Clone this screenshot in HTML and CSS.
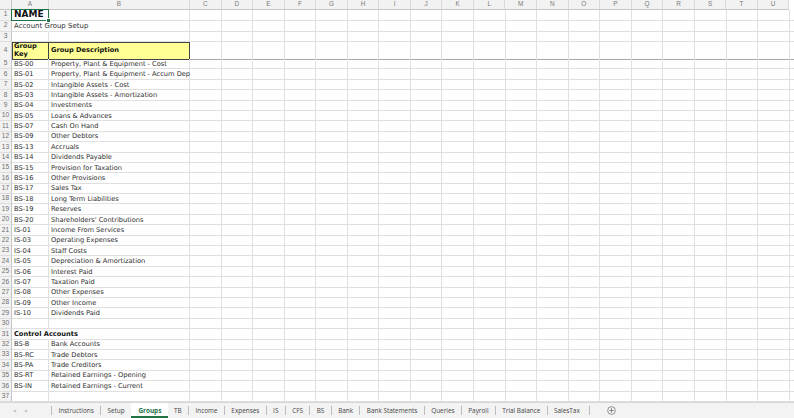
FILE: index.html
```html
<!DOCTYPE html>
<html>
<head>
<meta charset="utf-8">
<link rel="stylesheet" href="styles.css">
</head>
<body>
<div class="app">
  <div class="sheet">
    <div class="row colhead">
      <div class="rh corner"></div>
      <div class="ch">A</div>
      <div class="ch">B</div>
      <div class="ch-rest">
        <span>C</span><span>D</span><span>E</span><span>F</span><span>G</span><span>H</span><span>I</span><span>J</span><span>K</span><span>L</span><span>M</span><span>N</span><span>O</span><span>P</span><span>Q</span><span>R</span><span>S</span><span>T</span><span>U</span>
      </div>
    </div>
    <div class="row r1">
      <div class="rh">1</div>
      <div class="c a selected"><span class="name">NAME</span></div>
      <div class="c b"></div>
      <div class="rest"></div>
    </div>
    <div class="row r2">
      <div class="rh">2</div>
      <div class="c a"><span class="over">Account Group Setup</span></div>
      <div class="c b"></div>
      <div class="rest"></div>
    </div>
    <div class="row r3">
      <div class="rh">3</div>
      <div class="c a"></div>
      <div class="c b"></div>
      <div class="rest"></div>
    </div>
    <div class="row r4">
      <div class="rh">4</div>
      <div class="c a hdr">Group<br>Key</div>
      <div class="c b hdr">Group Description</div>
      <div class="rest"></div>
    </div>
    <div class="row"><div class="rh">5</div><div class="c a">BS-00</div><div class="c b">Property, Plant &amp; Equipment - Cost</div><div class="rest"></div></div>
    <div class="row"><div class="rh">6</div><div class="c a">BS-01</div><div class="c b">Property, Plant &amp; Equipment - Accum Dep</div><div class="rest"></div></div>
    <div class="row"><div class="rh">7</div><div class="c a">BS-02</div><div class="c b">Intangible Assets - Cost</div><div class="rest"></div></div>
    <div class="row"><div class="rh">8</div><div class="c a">BS-03</div><div class="c b">Intangible Assets - Amortization</div><div class="rest"></div></div>
    <div class="row"><div class="rh">9</div><div class="c a">BS-04</div><div class="c b">Investments</div><div class="rest"></div></div>
    <div class="row"><div class="rh">10</div><div class="c a">BS-05</div><div class="c b">Loans &amp; Advances</div><div class="rest"></div></div>
    <div class="row"><div class="rh">11</div><div class="c a">BS-07</div><div class="c b">Cash On Hand</div><div class="rest"></div></div>
    <div class="row"><div class="rh">12</div><div class="c a">BS-09</div><div class="c b">Other Debtors</div><div class="rest"></div></div>
    <div class="row"><div class="rh">13</div><div class="c a">BS-13</div><div class="c b">Accruals</div><div class="rest"></div></div>
    <div class="row"><div class="rh">14</div><div class="c a">BS-14</div><div class="c b">Dividends Payable</div><div class="rest"></div></div>
    <div class="row"><div class="rh">15</div><div class="c a">BS-15</div><div class="c b">Provision for Taxation</div><div class="rest"></div></div>
    <div class="row"><div class="rh">16</div><div class="c a">BS-16</div><div class="c b">Other Provisions</div><div class="rest"></div></div>
    <div class="row"><div class="rh">17</div><div class="c a">BS-17</div><div class="c b">Sales Tax</div><div class="rest"></div></div>
    <div class="row"><div class="rh">18</div><div class="c a">BS-18</div><div class="c b">Long Term Liabilities</div><div class="rest"></div></div>
    <div class="row"><div class="rh">19</div><div class="c a">BS-19</div><div class="c b">Reserves</div><div class="rest"></div></div>
    <div class="row"><div class="rh">20</div><div class="c a">BS-20</div><div class="c b">Shareholders' Contributions</div><div class="rest"></div></div>
    <div class="row"><div class="rh">21</div><div class="c a">IS-01</div><div class="c b">Income From Services</div><div class="rest"></div></div>
    <div class="row"><div class="rh">22</div><div class="c a">IS-03</div><div class="c b">Operating Expenses</div><div class="rest"></div></div>
    <div class="row"><div class="rh">23</div><div class="c a">IS-04</div><div class="c b">Staff Costs</div><div class="rest"></div></div>
    <div class="row"><div class="rh">24</div><div class="c a">IS-05</div><div class="c b">Depreciation &amp; Amortization</div><div class="rest"></div></div>
    <div class="row"><div class="rh">25</div><div class="c a">IS-06</div><div class="c b">Interest Paid</div><div class="rest"></div></div>
    <div class="row"><div class="rh">26</div><div class="c a">IS-07</div><div class="c b">Taxation Paid</div><div class="rest"></div></div>
    <div class="row"><div class="rh">27</div><div class="c a">IS-08</div><div class="c b">Other Expenses</div><div class="rest"></div></div>
    <div class="row"><div class="rh">28</div><div class="c a">IS-09</div><div class="c b">Other Income</div><div class="rest"></div></div>
    <div class="row"><div class="rh">29</div><div class="c a">IS-10</div><div class="c b">Dividends Paid</div><div class="rest"></div></div>
    <div class="row"><div class="rh">30</div><div class="c a"></div><div class="c b"></div><div class="rest"></div></div>
    <div class="row"><div class="rh">31</div><div class="c a spill"><span class="over bold">Control Accounts</span></div><div class="c b"></div><div class="rest"></div></div>
    <div class="row"><div class="rh">32</div><div class="c a">BS-B</div><div class="c b">Bank Accounts</div><div class="rest"></div></div>
    <div class="row"><div class="rh">33</div><div class="c a">BS-RC</div><div class="c b">Trade Debtors</div><div class="rest"></div></div>
    <div class="row"><div class="rh">34</div><div class="c a">BS-PA</div><div class="c b">Trade Creditors</div><div class="rest"></div></div>
    <div class="row"><div class="rh">35</div><div class="c a">BS-RT</div><div class="c b">Retained Earnings - Opening</div><div class="rest"></div></div>
    <div class="row"><div class="rh">36</div><div class="c a">BS-IN</div><div class="c b">Retained Earnings - Current</div><div class="rest"></div></div>
    <div class="row"><div class="rh">37</div><div class="c a"></div><div class="c b"></div><div class="rest"></div></div>
  </div>
  <div class="tabbar">
    <div class="navs"><span class="nav">&#9664;</span><span class="nav">&#9654;</span></div>
    <div class="tab">Instructions</div>
    <div class="tab">Setup</div>
    <div class="tab active">Groups</div>
    <div class="tab">TB</div>
    <div class="tab">Income</div>
    <div class="tab">Expenses</div>
    <div class="tab">IS</div>
    <div class="tab">CFS</div>
    <div class="tab">BS</div>
    <div class="tab">Bank</div>
    <div class="tab">Bank Statements</div>
    <div class="tab">Queries</div>
    <div class="tab">Payroll</div>
    <div class="tab">Trial Balance</div>
    <div class="tab last">SalesTax</div>
    <div class="add">
      <svg width="9" height="9" viewBox="0 0 10 10"><circle cx="5" cy="5" r="4.3" fill="none" stroke="#7a7a7a" stroke-width="0.9"/><path d="M5 2.6v4.8M2.6 5h4.8" stroke="#7a7a7a" stroke-width="1"/></svg>
    </div>
  </div>
</div>
</body>
</html>
```
FILE: styles.css
```css
html, body {
  margin: 0;
  padding: 0;
  background: #ffffff;
}
.app {
  width: 794px;
  height: 418px;
  overflow: hidden;
  display: flex;
  flex-direction: column;
  font-family: "DejaVu Sans", "Liberation Sans", sans-serif;
}
.sheet {
  height: 402px;
  overflow: hidden;
  flex: none;
}
.row {
  display: grid;
  grid-template-columns: 12px 37px 141px 1fr;
  height: 10.4px;
  box-sizing: border-box;
}
.colhead { height: 9.5px; }
.r1 { height: 11px; }
.r2 { height: 11px; }
.r3 { height: 10.5px; }
.r4 { height: 17px; }

.rh {
  background: #f2f2f2;
  border-right: 1px solid #c6c6c6;
  border-bottom: 1px solid #dedede;
  box-sizing: border-box;
  color: #707070;
  font-family: "Liberation Sans", sans-serif;
  font-size: 6.6px;
  display: flex;
  align-items: center;
  justify-content: center;
  line-height: 1;
}
.colhead .rh { border-bottom: 1px solid #c6c6c6; }
.ch, .ch-rest span {
  background: #f2f2f2;
  border-right: 1px solid #dadada;
  border-bottom: 1px solid #c6c6c6;
  box-sizing: border-box;
  color: #7a7a7a;
  font-family: "Liberation Sans", sans-serif;
  font-size: 6.4px;
  display: flex;
  align-items: center;
  justify-content: center;
  line-height: 1;
}
.ch-rest {
  display: flex;
  overflow: hidden;
}
.ch-rest span {
  flex: 0 0 31.56px;
  height: 100%;
}

.c {
  border-right: 1px solid #e0e0e0;
  border-bottom: 1px solid #e0e0e0;
  box-sizing: border-box;
  font-size: 6.65px;
  color: #2e2e2e;
  display: flex;
  align-items: flex-end;
  padding: 0 0 1px 2px;
  white-space: nowrap;
  line-height: 1;
  position: relative;
}
.rest {
  border-bottom: 1px solid #e0e0e0;
  box-sizing: border-box;
  background-image: repeating-linear-gradient(to right, transparent 0, transparent 30.56px, #e0e0e0 30.56px, #e0e0e0 31.56px);
}
.over {
  position: relative;
  z-index: 1;
  white-space: nowrap;
}
.bold { font-weight: bold; color: #111; }
.spill { border-right-color: transparent; }

.r1 .a .name {
  font-weight: bold;
  font-size: 9px;
  color: #111;
}
.r2 .a { font-size: 7px; color: #333; border-right-color: transparent; }

.selected::after {
  content: "";
  position: absolute;
  left: -1px;
  top: -1px;
  right: -1px;
  bottom: -1px;
  border: 1.5px solid #217346;
  pointer-events: none;
}
.selected::before {
  content: "";
  position: absolute;
  right: -3px;
  bottom: -3px;
  width: 3px;
  height: 3px;
  background: #217346;
  border: 1px solid #fff;
  z-index: 2;
}

.r4 .c, .r4 .rest, .r4 .rh { border-bottom-color: #a8a8a8; }
.hdr {
  background: #ffff96;
  font-weight: bold;
  align-items: center;
  border-top: 1px solid #444;
  border-bottom: 1px solid #444 !important;
  border-right: 1px solid #444;
  line-height: 1.15;
  white-space: normal;
  color: #111;
}
.r4 .a.hdr { border-left: 1px solid #444; padding-left: 1px; }
.r4 .b.hdr { padding-left: 2px; }

.tabbar {
  height: 16px;
  flex: none;
  background: #f3f3f3;
  display: flex;
  align-items: stretch;
  font-family: "Open Sans", "Noto Sans", sans-serif;
  font-size: 6.4px;
  color: #444;
  border-top: 1px solid #d6d6d6;
  box-sizing: border-box;
}
.navs {
  width: 52px;
  display: flex;
  align-items: center;
  gap: 9px;
  padding-left: 13px;
  box-sizing: border-box;
  border-right: 1px solid #bdbdbd;
  margin: 3px 0;
}
.nav {
  color: #c4c4c4;
  font-size: 4px;
}
.tab {
  display: flex;
  align-items: center;
  padding: 0 6.38px;
  border-right: 1px solid #bdbdbd;
  margin: 3px 0;
  white-space: nowrap;
}
.tab.active {
  background: #fff;
  color: #217346;
  font-weight: bold;
  margin: 0 0 0 -1px;
  padding: 0 6.38px 0 7.38px;
  border-right: none;
  box-shadow: inset 0 -2px 0 #217346;
}
.tab.last { padding-right: 9px; }
.add {
  display: flex;
  align-items: center;
  padding-left: 17px;
}
```
